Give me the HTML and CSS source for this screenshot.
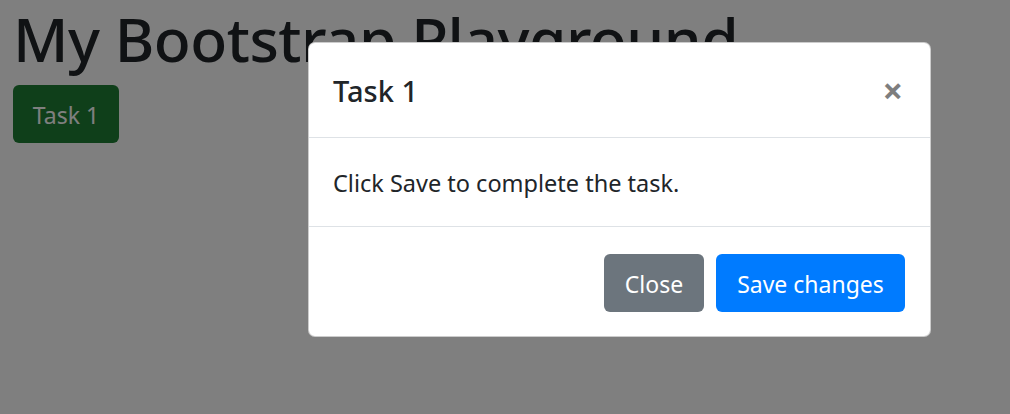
FILE: index.html
```html
<!DOCTYPE html>
<html>
<head>
<meta charset="utf-8">
<link rel="stylesheet" href="styles.css">
</head>
<body>
<main class="page">
  <h1 class="title">My Bootstrap Playground</h1>
  <button class="btn btn-task">Task 1</button>
</main>
<div class="backdrop"></div>
<div class="modal">
  <div class="modal-header">
    <h5 class="modal-title">Task 1</h5>
    <span class="close">×</span>
  </div>
  <div class="modal-body">Click Save to complete the task.</div>
  <div class="modal-footer">
    <button class="btn btn-secondary">Close</button>
    <button class="btn btn-primary">Save changes</button>
  </div>
</div>
</body>
</html>
```
FILE: styles.css
```css
html, body { margin: 0; padding: 0; }
body {
  width: 1010px; height: 414px; overflow: hidden;
  background: #fff;
  font-family: "Noto Sans", "Open Sans", sans-serif;
  color: #212529;
  position: relative;
}
.page { padding: 0 13px; }
.title {
  margin: 0;
  font-size: 60.5px;
  font-weight: 500;
  line-height: 78px;
  letter-spacing: -0.5px;
  white-space: nowrap;
}
.btn {
  border: 0;
  font-family: inherit;
  font-size: 23px;
  border-radius: 6px;
  height: 58px;
  padding: 2px 0 0;
  color: #fff;
  white-space: nowrap;
}
.btn-task {
  margin-top: 7px;
  width: 106px;
  background: #1e7e34;
  color: #fff;
}
.backdrop {
  position: absolute; inset: 0;
  background: rgba(0,0,0,0.5);
}
.modal {
  position: absolute;
  left: 308px; top: 42px;
  width: 621px;
  background: #fff;
  border: 1px solid rgba(0,0,0,0.2);
  border-radius: 7px;
  display: flex; flex-direction: column;
}
.modal-header {
  height: 94px;
  display: flex; align-items: center; justify-content: space-between;
  padding: 0 27px 0 24px;
  border-bottom: 1px solid #dee2e6;
}
.modal-title {
  margin: 0;
  font-size: 29px;
  font-weight: 500;
  color: #212529;
}
.close {
  font-size: 36px;
  font-weight: 700;
  color: #000;
  opacity: 0.5;
  line-height: 1;
  margin-top: 2px;
}
.modal-body {
  height: 89px;
  box-sizing: border-box;
  display: flex; align-items: center;
  padding: 2px 24px 0;
  font-size: 23.5px;
  border-bottom: 1px solid #dee2e6;
}
.modal-footer {
  height: 109px;
  box-sizing: border-box;
  display: flex; align-items: center; justify-content: flex-end;
  gap: 12px;
  padding: 2px 25px 0;
}
.btn-secondary { background: #6c757d; width: 100px; }
.btn-primary { background: #007bff; width: 189px; }
```
